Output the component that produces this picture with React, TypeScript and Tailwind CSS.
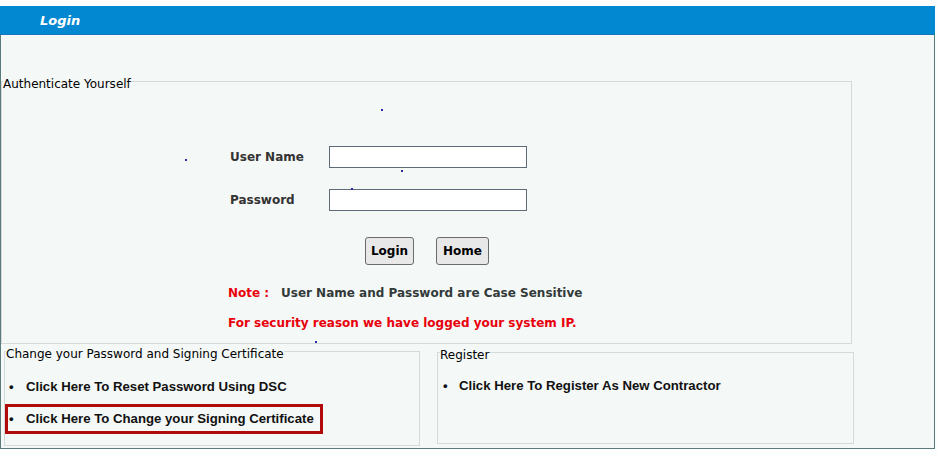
import React from "react";

const dots: [number, number][] = [
  [381, 109],
  [185, 159],
  [401, 170],
  [351, 188],
  [315, 341],
];

export default function App() {
  return (
    <div
      className="relative w-[938px] h-[456px] bg-[#fcfdfd] pt-[6px] overflow-hidden"
      style={{ fontFamily: '"DejaVu Sans", Verdana, sans-serif' }}
    >
      <div className="w-[935px] h-[29px] bg-[#0288d1] border-b border-[#1479b4] flex items-center pl-[40px]">
        <span className="text-white italic font-bold text-[13px] leading-[15px]">Login</span>
      </div>
      <div className="w-[935px] h-[414px] pt-[36px] border-l border-r border-b border-[#5b7b7b] bg-[#f4f8f7]">
        <fieldset className="w-[851px] border border-[#d3dada] pb-[12px]">
          <legend className="ml-[1px] pt-[6px] text-[12px] leading-[15px] text-black">Authenticate Yourself</legend>
          <div className="mt-[54px] flex items-center h-[22px] pl-[228px]">
            <span className="w-[99px] text-[12px] font-bold text-[#333]">User Name</span>
            <input
              type="text"
              className="w-[198px] h-[22px] bg-white border border-[#5d6b78] outline-none"
            />
          </div>
          <div className="mt-[21px] flex items-center h-[22px] pl-[228px]">
            <span className="w-[99px] text-[12px] font-bold text-[#333]">Password</span>
            <input
              type="password"
              className="w-[198px] h-[22px] bg-white border border-[#5d6b78] outline-none"
            />
          </div>
          <div className="mt-[26px] flex pl-[363px] gap-[22px]">
            <button className="w-[49px] h-[28px] rounded-[3px] border border-[#6b6b6b] bg-[#e8e8e8] text-[12px] font-bold text-black">
              Login
            </button>
            <button className="w-[53px] h-[28px] rounded-[3px] border border-[#6b6b6b] bg-[#e8e8e8] text-[12px] font-bold text-black">
              Home
            </button>
          </div>
          <div className="mt-[21px] pl-[226px] text-[12px] leading-[15px] font-bold flex">
            <span className="text-[#e8000b] w-[53px]">Note :</span>
            <span className="text-[#333a3a]">User Name and Password are Case Sensitive</span>
          </div>
          <div className="mt-[15px] pl-[226px] text-[12px] leading-[15px] font-bold text-[#e8000b]">
            For security reason we have logged your system IP.
          </div>
        </fieldset>
        <div className="flex items-start">
          <fieldset className="ml-[3px] -mt-[3px] w-[416px] h-[105px] border border-[#d3dada]">
            <legend className="ml-[1px] pt-[6px] text-[12px] leading-[15px] text-black">
              Change your Password and Signing Certificate
            </legend>
            <div
              className="mt-[10px] h-[30px] flex items-center pl-[4px] text-[13.2px] font-bold text-[#111] whitespace-nowrap"
              style={{ fontFamily: '"Liberation Sans", Arial, sans-serif' }}
            >
              <span className="w-[17px]">•</span>
              <span>Click Here To Reset Password Using DSC</span>
            </div>
            <div
              className="mt-[2px] w-[318px] h-[30px] flex items-center pl-[1px] border-[3px] border-[#b00a0a] text-[13.2px] font-bold text-[#111] whitespace-nowrap"
              style={{ fontFamily: '"Liberation Sans", Arial, sans-serif' }}
            >
              <span className="w-[17px]">•</span>
              <span>Click Here To Change your Signing Certificate</span>
            </div>
          </fieldset>
          <fieldset className="ml-[17px] -mt-[2px] w-[417px] h-[102px] border border-[#d3dada]">
            <legend className="ml-[2px] pt-[6px] text-[12px] leading-[15px] text-black">Register</legend>
            <div
              className="mt-[8px] h-[30px] flex items-center pl-[5px] text-[13.2px] font-bold text-[#111] whitespace-nowrap"
              style={{ fontFamily: '"Liberation Sans", Arial, sans-serif' }}
            >
              <span className="w-[16px]">•</span>
              <span>Click Here To Register As New Contractor</span>
            </div>
          </fieldset>
        </div>
      </div>
      {dots.map(([x, y], i) => (
        <span
          key={i}
          className="absolute w-[2px] h-[2px] bg-[#2a2aa8]"
          style={{ left: x, top: y }}
        />
      ))}
    </div>
  );
}
